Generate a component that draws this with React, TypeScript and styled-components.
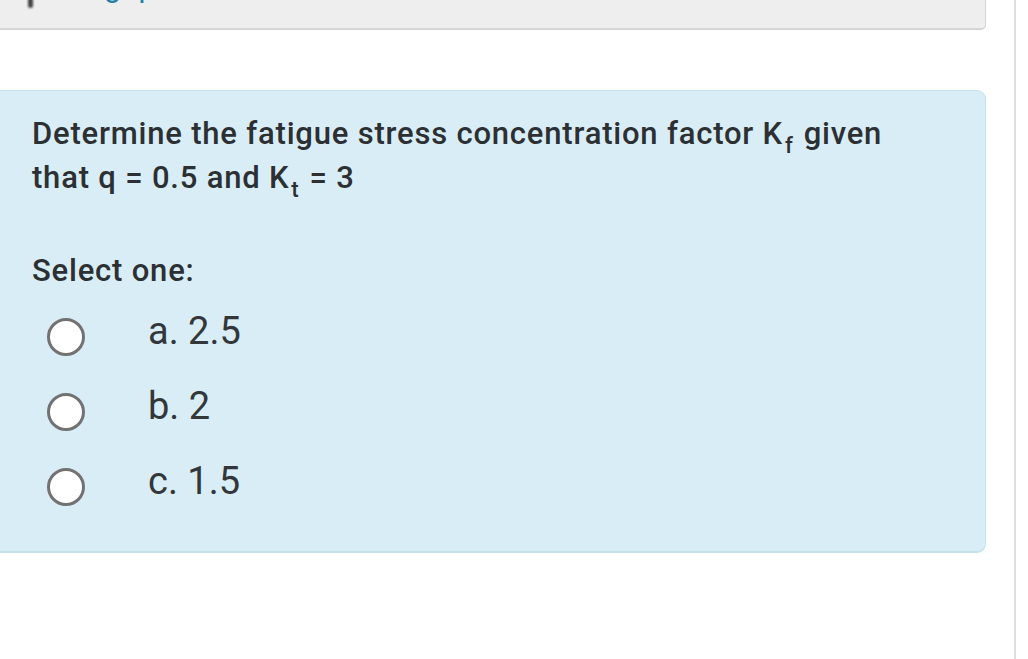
import React from "react";
import styled, { createGlobalStyle } from "styled-components";

const Global = createGlobalStyle`
  html, body { margin: 0; padding: 0; background: #fff; }
  body { font-family: Roboto, "Noto Sans", Arial, sans-serif; overflow: hidden; }
`;

const Page = styled.div`
  display: flex;
  width: 1028px;
  height: 659px;
  overflow: hidden;
`;

const Main = styled.div`
  width: 986px;
  display: flex;
  flex-direction: column;
`;

const Rail = styled.div`
  margin-left: 28px;
  width: 2px;
  height: 659px;
  background: #dedede;
`;

const InfoBox = styled.div`
  height: 30px;
  margin-left: -10px;
  box-sizing: border-box;
  background: #eeeeee;
  border: 1px solid #d4d4d4;
  border-top: none;
  border-bottom-width: 2px;
  border-radius: 0 0 5px 0;
  overflow: hidden;
`;

const FlagRow = styled.div`
  display: flex;
  align-items: flex-start;
  gap: 31px;
  margin-top: -31px;
  padding-left: 37px;
  height: 36px;
`;

const FlagPole = styled.span`
  width: 5px;
  height: 38px;
  margin-top: 1px;
  border-radius: 0 0 3px 3px;
  background: #444;
  filter: blur(0.8px);
`;

const FlagLink = styled.span`
  font-size: 30px;
  line-height: 36px;
  color: #2a7fa5;
`;

const QuestionBox = styled.div`
  margin-top: 60px;
  margin-left: -10px;
  height: 463px;
  box-sizing: border-box;
  background: #d9edf7;
  border: 1px solid #c3e3ec;
  border-bottom-width: 2px;
  border-radius: 0 9px 9px 0;
  padding: 21px 0 0 41px;
  color: #2c3033;
`;

const QText = styled.div`
  font-size: 31px;
  font-weight: 500;
  letter-spacing: 0.8px;
  line-height: 44px;
  width: 900px;
`;

const Sub = styled.sub`
  font-size: 0.72em;
  vertical-align: -0.42em;
  line-height: 0;
  margin-left: 2px;
  margin-right: 10px;
`;

const Prompt = styled.div`
  margin-top: 49px;
  font-size: 31px;
  font-weight: 500;
  letter-spacing: 0.8px;
  line-height: 44px;
`;

const Options = styled.div`
  display: flex;
  flex-direction: column;
  gap: 25px;
  margin-top: 13px;
  margin-left: 15px;
`;

const Option = styled.label`
  display: flex;
  align-items: center;
  height: 50px;
  font-size: 38px;
  font-weight: 400;
  color: #33373a;
`;

const Radio = styled.span`
  width: 38px;
  height: 38px;
  box-sizing: border-box;
  border-radius: 50%;
  border: 3px solid #727272;
  background: #fff;
  margin-right: 63px;
  margin-top: 12px;
  flex-shrink: 0;
`;

const options = ["a. 2.5", "b. 2", "c. 1.5"];

export default function App() {
  return (
    <>
      <Global />
      <Page>
        <Main>
          <InfoBox>
            <FlagRow>
              <FlagPole />
              <FlagLink>Flag question</FlagLink>
            </FlagRow>
          </InfoBox>
          <QuestionBox>
            <QText>
              Determine the fatigue stress concentration factor K<Sub>f</Sub>given that q = 0.5 and K<Sub>t</Sub>= 3
            </QText>
            <Prompt>Select one:</Prompt>
            <Options>
              {options.map((o) => (
                <Option key={o}>
                  <Radio />
                  {o}
                </Option>
              ))}
            </Options>
          </QuestionBox>
        </Main>
        <Rail />
      </Page>
    </>
  );
}
